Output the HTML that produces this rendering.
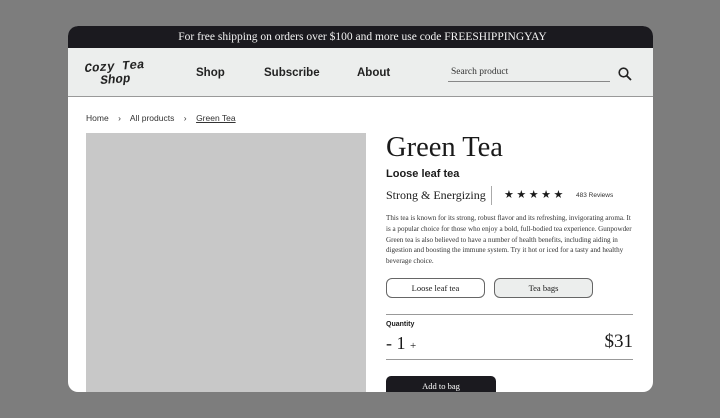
<!DOCTYPE html>
<html><head><style>
*{margin:0;padding:0;box-sizing:border-box}
body{width:720px;height:418px;background:#7d7d7d;position:relative;overflow:hidden;font-family:"Liberation Sans",sans-serif}
.card{position:absolute;left:68px;top:26px;width:585px;height:366px;background:#fff;border-radius:10px;overflow:hidden}
.top{height:22px;background:#1b1a1f;color:#f2f2f2;font-family:"Liberation Serif",serif;font-size:11.5px;text-align:center;line-height:22px;padding-left:4px}
.hdr{position:absolute;top:22px;left:0;width:585px;height:49px;background:#eceeed;border-bottom:1.5px solid #999}
.logo{position:absolute;left:17px;top:13px;font-family:"Liberation Mono",monospace;font-style:italic;font-weight:bold;font-size:12.5px;line-height:13px;text-align:center;color:#222;transform:rotate(-4deg)}
.nav{position:absolute;top:19px;font-weight:bold;font-size:11.5px;color:#222}
.search{position:absolute;left:380px;top:19px;width:162px;height:15px;border-bottom:1px solid #888;font-family:"Liberation Serif",serif;font-size:9.5px;color:#333;padding-left:3px}
.bc{position:absolute;top:87px;left:18px;font-size:8.5px;color:#333}
.img{position:absolute;left:18px;top:107px;width:280px;height:270px;background:#c8c8c8}
.serif{font-family:"Liberation Serif",serif;color:#1a1a1a}
</style></head><body>
<div class="card">
<div class="top">For free shipping on orders over $100 and more use code FREESHIPPINGYAY</div>
<div class="hdr">
<div class="logo">Cozy Tea<br>Shop</div>
<div class="nav" style="left:128px">Shop</div>
<div class="nav" style="left:196px">Subscribe</div>
<div class="nav" style="left:289px">About</div>
<div class="search">Search product</div>
<svg style="position:absolute;left:550px;top:19px" width="14" height="14" viewBox="0 0 14 14"><circle cx="5.5" cy="5.5" r="4.3" fill="none" stroke="#222" stroke-width="1.6"/><line x1="8.7" y1="8.7" x2="13" y2="13" stroke="#222" stroke-width="1.8"/></svg>
</div>
<div class="bc">Home &nbsp;&nbsp;&nbsp;›&nbsp;&nbsp;&nbsp; All products &nbsp;&nbsp;&nbsp;›&nbsp;&nbsp;&nbsp; <span style="text-decoration:underline">Green Tea</span></div>
<div class="img"></div>
<div class="serif" style="position:absolute;left:318px;top:106px;font-size:28.5px">Green Tea</div>
<div style="position:absolute;left:318px;top:142px;font-size:11px;font-weight:bold;color:#1a1a1a">Loose leaf tea</div>
<div class="serif" style="position:absolute;left:318px;top:162px;font-size:12px">Strong &amp; Energizing</div>
<div style="position:absolute;left:423px;top:160px;width:1px;height:19px;background:#aaa"></div>
<div style="position:absolute;left:436px;top:162px;font-size:11px;letter-spacing:2.5px;color:#1a1a1a">★★★★★</div>
<div style="position:absolute;left:508px;top:166px;font-size:6.5px;color:#333">483 Reviews</div>
<div class="serif" style="position:absolute;left:318px;top:187px;width:246px;font-size:7.1px;line-height:10.8px;color:#333">This tea is known for its strong, robust flavor and its refreshing, invigorating aroma. It is a popular choice for those who enjoy a bold, full-bodied tea experience. Gunpowder Green tea is also believed to have a number of health benefits, including aiding in digestion and boosting the immune system. Try it hot or iced for a tasty and healthy beverage choice.</div>
<div class="serif" style="position:absolute;left:318px;top:252px;width:99px;height:20px;border:1px solid #666;border-radius:6px;font-size:8.5px;text-align:center;line-height:18px">Loose leaf tea</div>
<div class="serif" style="position:absolute;left:426px;top:252px;width:99px;height:20px;border:1px solid #666;border-radius:6px;background:#eceeed;font-size:8.5px;text-align:center;line-height:18px">Tea bags</div>
<div style="position:absolute;left:318px;top:288px;width:247px;height:1px;background:#999"></div>
<div style="position:absolute;left:318px;top:295px;font-size:7px;font-weight:bold;color:#1a1a1a">Quantity</div>
<div class="serif" style="position:absolute;left:318px;top:307px;font-size:18px">- 1 <span style="font-size:11px">+</span></div>
<div class="serif" style="position:absolute;right:20px;top:305px;font-size:19px">$31</div>
<div style="position:absolute;left:318px;top:333px;width:247px;height:1px;background:#999"></div>
<div class="serif" style="position:absolute;left:318px;top:350px;width:110px;height:22px;background:#1b1a1f;border-radius:5px;color:#fff;font-size:8.5px;text-align:center;line-height:20px">Add to bag</div>
</div>
</body></html>
